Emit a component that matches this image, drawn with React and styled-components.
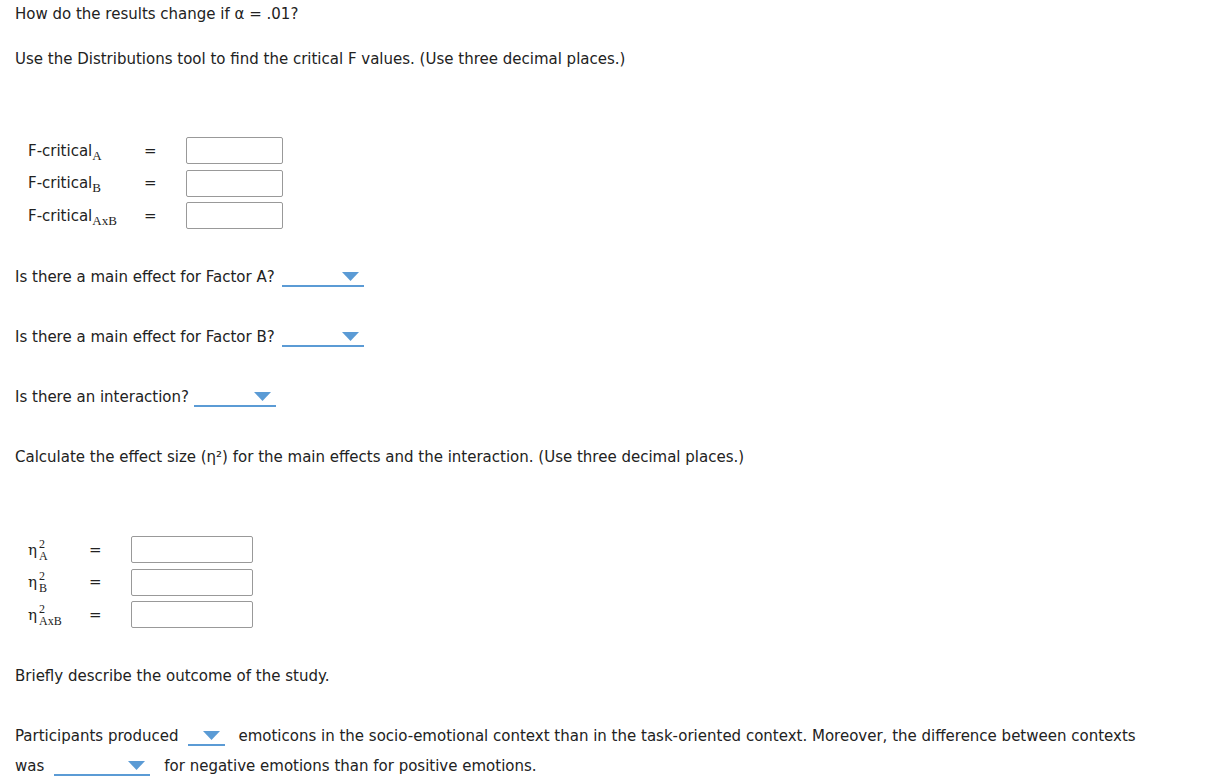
import React from 'react';
import styled, { createGlobalStyle } from 'styled-components';

const Global = createGlobalStyle`
  body {
    margin: 0;
    background: #fff;
    font-family: "DejaVu Sans", Verdana, sans-serif;
    font-size: 15px;
    color: #222;
  }
`;

const Page = styled.div`
  padding: 4px 15px 0 15px;
`;

const P = styled.div`
  line-height: 20px;
  margin-top: ${p => p.top || 0}px;
  white-space: nowrap;
`;

const Grid = styled.div`
  display: grid;
  grid-template-columns: ${p => p.cols};
  grid-auto-rows: 27px;
  row-gap: 5.5px;
  align-items: center;
  margin-top: ${p => p.top}px;
  padding-left: 13px;
`;

const Label = styled.span`
  line-height: 20px;
`;

const Sub = styled.sub`
  font-family: "Liberation Serif", "Times New Roman", serif;
  font-size: 13px;
  vertical-align: -4px;
  line-height: 0;
`;

const Eta = styled.span`
  display: inline-flex;
  align-items: center;
`;

const EtaGlyph = styled.span`
  font-family: "DejaVu Serif", "Liberation Serif", serif;
  font-size: 15px;
  line-height: 20px;
  margin-right: 2px;
`;

const Scripts = styled.span`
  display: inline-flex;
  flex-direction: column;
  font-family: "Liberation Serif", "Times New Roman", serif;
  font-size: 12px;
  line-height: 12px;
`;

const Eq = styled.span`
  text-align: left;
`;

const Input = styled.div`
  box-sizing: border-box;
  width: ${p => p.w}px;
  height: 27px;
  border: 1px solid #999;
  border-radius: 2px;
  background: #fff;
`;

const Select = styled.span`
  display: inline-block;
  position: relative;
  box-sizing: border-box;
  width: ${p => p.w}px;
  height: 20px;
  border-bottom: 2px solid #5b9bd5;
  vertical-align: -5px;
  margin: 0 ${p => p.mr || 0}px 0 ${p => p.ml || 0}px;
`;

const Arrow = styled.svg`
  position: absolute;
  right: 5px;
  top: 5px;
`;

function Drop({ w, ml, mr }) {
  return (
    <Select w={w} ml={ml} mr={mr}>
      <Arrow width="17" height="9" viewBox="0 0 17 9">
        <polygon points="0,0 17,0 8.5,9" fill="#5b9bd5" />
      </Arrow>
    </Select>
  );
}

const rows = ['A', 'B', 'AxB'];

export default function App() {
  return (
    <Page>
      <Global />
      <P>How do the results change if α = .01?</P>
      <P top={25}>Use the Distributions tool to find the critical F values. (Use three decimal places.)</P>

      <Grid cols="116px 42px 97px" top={68}>
        {rows.map(s => (
          <React.Fragment key={s}>
            <Label>F-critical<Sub>{s}</Sub></Label>
            <Eq>=</Eq>
            <Input w={97} />
          </React.Fragment>
        ))}
      </Grid>

      <P top={38}>Is there a main effect for Factor A? <Drop w={82} ml={3} /></P>
      <P top={40}>Is there a main effect for Factor B? <Drop w={82} ml={3} /></P>
      <P top={40}>Is there an interaction? <Drop w={82} /></P>

      <P top={40}>Calculate the effect size (η²) for the main effects and the interaction. (Use three decimal places.)</P>

      <Grid cols="61px 42px 122px" top={69}>
        {rows.map(s => (
          <React.Fragment key={s}>
            <Eta>
              <EtaGlyph>η</EtaGlyph>
              <Scripts><span>2</span><span>{s}</span></Scripts>
            </Eta>
            <Eq>=</Eq>
            <Input w={122} />
          </React.Fragment>
        ))}
      </Grid>

      <P top={38}>Briefly describe the outcome of the study.</P>

      <P top={40}>
        Participants produced<Drop w={37} ml={10} mr={13} />emoticons in the socio-emotional context than in the task-oriented context. Moreover, the difference between contexts
      </P>
      <P top={10}>
        was<Drop w={96} ml={10} mr={14} />for negative emotions than for positive emotions.
      </P>
    </Page>
  );
}
